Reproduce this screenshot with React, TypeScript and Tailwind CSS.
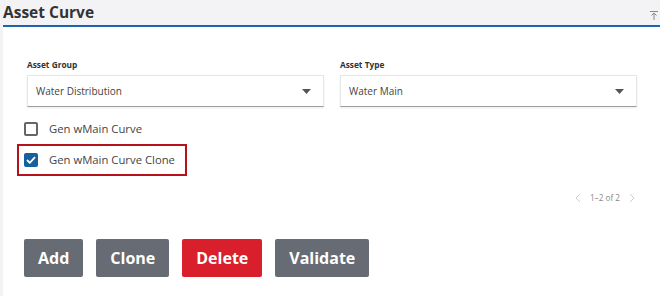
import { useState } from "react";

const font = { fontFamily: '"Open Sans", "Noto Sans", sans-serif' };

function Select({ label, value }: { label: string; value: string }) {
  return (
    <div className="flex-1">
      <div className="text-[8.3px] font-bold text-[#333] leading-[12px] mb-[4px]">{label}</div>
      <div className="h-[32px] flex items-center justify-between pl-[8px] pr-[12px] bg-white border border-[#e6e6e6] border-b-[#9e9e9e] shadow-[0_1px_2px_rgba(0,0,0,0.08)]">
        <span className="text-[10px] text-[#444]">{value}</span>
        <svg width="9" height="5" viewBox="0 0 9 5"><path d="M0 0h9L4.5 5z" fill="#555" /></svg>
      </div>
    </div>
  );
}

function Check({ label, checked, onToggle }: { label: string; checked: boolean; onToggle: () => void }) {
  return (
    <div className="flex items-center gap-[11px] h-[16px] cursor-pointer" onClick={onToggle}>
      {checked ? (
        <div className="w-[14px] h-[14px] rounded-[2px] bg-[#185f9e] flex items-center justify-center">
          <svg width="10" height="8" viewBox="0 0 10 8"><path d="M1 4l2.8 2.8L9 1.2" stroke="#fff" strokeWidth="1.8" fill="none" /></svg>
        </div>
      ) : (
        <div className="w-[14px] h-[14px] rounded-[2px] border-2 border-[#666]" />
      )}
      <span className="text-[11.3px] text-[#444]">{label}</span>
    </div>
  );
}

export default function App() {
  const [a, setA] = useState(false);
  const [b, setB] = useState(true);
  const btn = "h-[38px] px-[14px] rounded-[2px] text-white font-bold text-[16px]";

  return (
    <div className="w-[660px] h-[296px] bg-[#f3f3f6] flex flex-col" style={font}>
      <div className="h-[25px] flex items-center justify-between pl-[3px] pr-[2px]">
        <h2 className="text-[15.5px] font-bold text-[#333] leading-none">Asset Curve</h2>
        <svg width="8" height="9" viewBox="0 0 8 9" className="mt-[6px]"><path d="M0 .5h8M4 2v7M1.5 4.5L4 2l2.5 2.5" stroke="#888" strokeWidth="1" fill="none" /></svg>
      </div>
      <div className="flex-1 ml-[3px] bg-white border-t-2 border-[#1c63b0] flex flex-col">
        <div className="flex gap-[16px] pl-[24px] pr-[23px] pt-[32px]">
          <Select label="Asset Group" value="Water Distribution" />
          <Select label="Asset Type" value="Water Main" />
        </div>
        <div className="pl-[21px] mt-[14px]">
          <Check label="Gen wMain Curve" checked={a} onToggle={() => setA(!a)} />
          <div className="mt-[7px] ml-[-7px] w-[170px] h-[32px] pl-[5px] border-2 border-[#b5121b] flex items-center">
            <Check label="Gen wMain Curve Clone" checked={b} onToggle={() => setB(!b)} />
          </div>
        </div>
        <div className="flex justify-end items-center gap-[9px] pr-[25px] mt-[16px] text-[8.2px] leading-[12px] text-[#888]">
          <svg width="6" height="10" viewBox="0 0 6 10"><path d="M5 1L1 5l4 4" stroke="#ccc" strokeWidth="1" fill="none" /></svg>
          <span>1–2 of 2</span>
          <svg width="6" height="10" viewBox="0 0 6 10"><path d="M1 1l4 4-4 4" stroke="#ccc" strokeWidth="1" fill="none" /></svg>
        </div>
        <div className="flex gap-[13px] pl-[21px] mt-[35px]">
          <button className={`${btn} bg-[#676b74]`}>Add</button>
          <button className={`${btn} bg-[#676b74]`}>Clone</button>
          <button className={`${btn} bg-[#d91f2b]`}>Delete</button>
          <button className={`${btn} bg-[#676b74]`}>Validate</button>
        </div>
      </div>
    </div>
  );
}
